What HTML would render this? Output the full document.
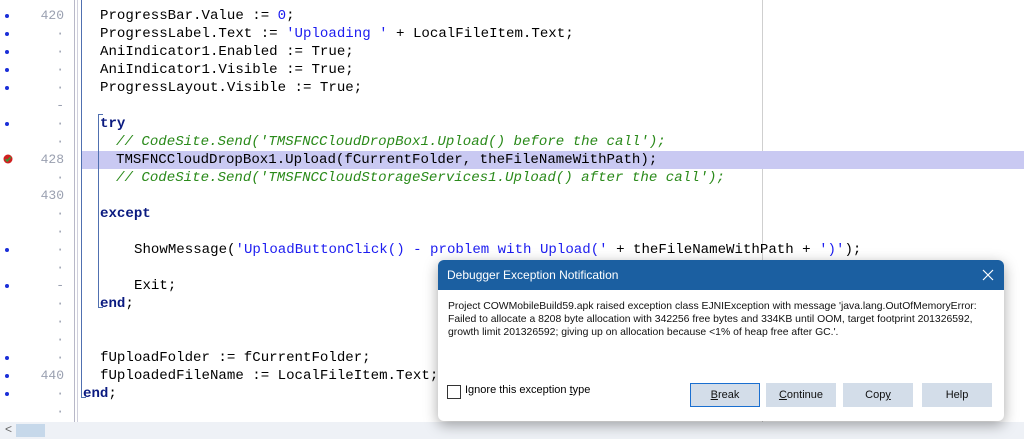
<!DOCTYPE html>
<html><head><meta charset="utf-8"><style>
body{margin:0;width:1024px;height:439px;overflow:hidden;background:#fff;position:relative;font-family:"Liberation Mono",monospace}
.l{position:absolute;font-size:14.1px;line-height:18px;white-space:pre;color:#000}
.g{position:absolute;font-size:13px;line-height:18px;color:#9aa0b0;width:30px;text-align:right;left:34px;font-family:"Liberation Mono",monospace}
.d{position:absolute;left:5px;width:4px;height:4px;border-radius:50%;background:#1a2ed8}
.s{color:#1c1cf0}.c{color:#2a8a1a;font-style:italic}.k{color:#0a1a80;font-weight:bold}.n{color:#1c1cf0}
.dlg{position:absolute;left:438px;top:260px;width:566px;height:161px;background:#fff;border-radius:6px;box-shadow:0 4px 14px rgba(0,0,0,.35);font-family:"Liberation Sans",sans-serif;overflow:hidden}
.tb{height:30px;background:#1b5fa1;color:#fff;font-size:12px;line-height:30px;padding-left:9px}
.msg{position:absolute;left:10px;top:40px;font-size:10.4px;line-height:13px;color:#111;white-space:pre}
.btn{position:absolute;top:123px;height:24px;width:70px;background:#d3dde9;font-size:11px;line-height:24px;text-align:center;color:#111}
</style></head><body>
<div style="position:absolute;left:74px;top:0;width:1px;height:422px;background:#b8b8c8"></div>
<div style="position:absolute;left:77px;top:0;width:1px;height:422px;background:#d0d0dc"></div>
<div style="position:absolute;left:762px;top:0;width:1px;height:422px;background:#cfcfcf"></div>
<div style="position:absolute;left:82px;top:151px;width:942px;height:18px;background:#c9c9f2"></div>
<div style="position:absolute;left:98px;top:114px;width:1px;height:194px;background:#5070b0"></div>
<div style="position:absolute;left:98px;top:307px;width:5px;height:1px;background:#5070b0"></div>
<div style="position:absolute;left:98px;top:114px;width:5px;height:1px;background:#5070b0"></div>
<div style="position:absolute;left:81px;top:0;width:1px;height:398px;background:#5070b0"></div>
<div style="position:absolute;left:81px;top:397px;width:5px;height:1px;background:#5070b0"></div>

<div class="g" style="top:7px">420</div><div class="d" style="top:14px"></div>
<div class="g" style="top:25px">·</div><div class="d" style="top:32px"></div>
<div class="g" style="top:43px">·</div><div class="d" style="top:50px"></div>
<div class="g" style="top:61px">·</div><div class="d" style="top:68px"></div>
<div class="g" style="top:79px">·</div><div class="d" style="top:86px"></div>
<div class="g" style="top:97px">-</div>
<div class="g" style="top:115px">·</div><div class="d" style="top:122px"></div>
<div class="g" style="top:133px">·</div>
<div class="g" style="top:151px">428</div>
<svg style="position:absolute;left:3px;top:154px" width="10" height="10"><circle cx="5" cy="5" r="4.5" fill="#d02020"/><path d="M2.5 5.2 L4.3 7 L7.8 3" stroke="#3a9a3a" stroke-width="1.6" fill="none"/></svg>
<div class="g" style="top:169px">·</div>
<div class="g" style="top:187px">430</div>
<div class="g" style="top:205px">·</div>
<div class="g" style="top:223px">·</div>
<div class="g" style="top:241px">·</div><div class="d" style="top:248px"></div>
<div class="g" style="top:259px">·</div>
<div class="g" style="top:277px">-</div><div class="d" style="top:284px"></div>
<div class="g" style="top:295px">·</div>
<div class="g" style="top:313px">·</div>
<div class="g" style="top:331px">·</div>
<div class="g" style="top:349px">·</div><div class="d" style="top:356px"></div>
<div class="g" style="top:367px">440</div><div class="d" style="top:374px"></div>
<div class="g" style="top:385px">·</div><div class="d" style="top:392px"></div>
<div class="g" style="top:403px">·</div>

<div class="l" style="left:100px;top:7px">ProgressBar.Value := <span class="n">0</span>;</div>
<div class="l" style="left:100px;top:25px">ProgressLabel.Text := <span class="s">'Uploading '</span> + LocalFileItem.Text;</div>
<div class="l" style="left:100px;top:43px">AniIndicator1.Enabled := True;</div>
<div class="l" style="left:100px;top:61px">AniIndicator1.Visible := True;</div>
<div class="l" style="left:100px;top:79px">ProgressLayout.Visible := True;</div>
<div class="l k" style="left:100px;top:115px">try</div>
<div class="l c" style="left:116px;top:133px">// CodeSite.Send('TMSFNCCloudDropBox1.Upload() before the call');</div>
<div class="l" style="left:116px;top:151px">TMSFNCCloudDropBox1.Upload(fCurrentFolder, theFileNameWithPath);</div>
<div class="l c" style="left:116px;top:169px">// CodeSite.Send('TMSFNCCloudStorageServices1.Upload() after the call');</div>
<div class="l k" style="left:100px;top:205px">except</div>
<div class="l" style="left:134px;top:241px">ShowMessage(<span class="s">'UploadButtonClick() - problem with Upload('</span> + theFileNameWithPath + <span class="s">')'</span>);</div>
<div class="l" style="left:134px;top:277px">Exit;</div>
<div class="l" style="left:100px;top:295px"><span class="k">end</span>;</div>
<div class="l" style="left:100px;top:349px">fUploadFolder := fCurrentFolder;</div>
<div class="l" style="left:100px;top:367px">fUploadedFileName := LocalFileItem.Text;</div>
<div class="l" style="left:83px;top:385px"><span class="k">end</span>;</div>

<div style="position:absolute;left:0;top:422px;width:1024px;height:17px;background:#eef1f6"></div>
<div style="position:absolute;left:16px;top:424px;width:29px;height:13px;background:#c6d8ea"></div>
<div style="position:absolute;left:5px;top:422px;font:12px 'Liberation Sans',sans-serif;color:#666">&lt;</div>

<div class="dlg">
<div class="tb">Debugger Exception Notification</div>
<svg style="position:absolute;right:10px;top:9px" width="12" height="12"><path d="M1 1 L11 11 M11 1 L1 11" stroke="#fff" stroke-width="1.2"/></svg>
<div class="msg">Project COWMobileBuild59.apk raised exception class EJNIException with message 'java.lang.OutOfMemoryError:
Failed to allocate a 8208 byte allocation with 342256 free bytes and 334KB until OOM, target footprint 201326592,
growth limit 201326592; giving up on allocation because &lt;1% of heap free after GC.'.</div>
<div style="position:absolute;left:9px;top:125px;width:12px;height:12px;border:1px solid #333"></div>
<div style="position:absolute;left:27px;top:124px;font-size:11px">Ignore this exception <u>t</u>ype</div>
<div class="btn" style="left:252px;border:1px solid #1a6fd0;width:68px;height:22px;line-height:22px"><u>B</u>reak</div>
<div class="btn" style="left:328px"><u>C</u>ontinue</div>
<div class="btn" style="left:405px">Cop<u>y</u></div>
<div class="btn" style="left:484px">Help</div>
</div>
</body></html>
